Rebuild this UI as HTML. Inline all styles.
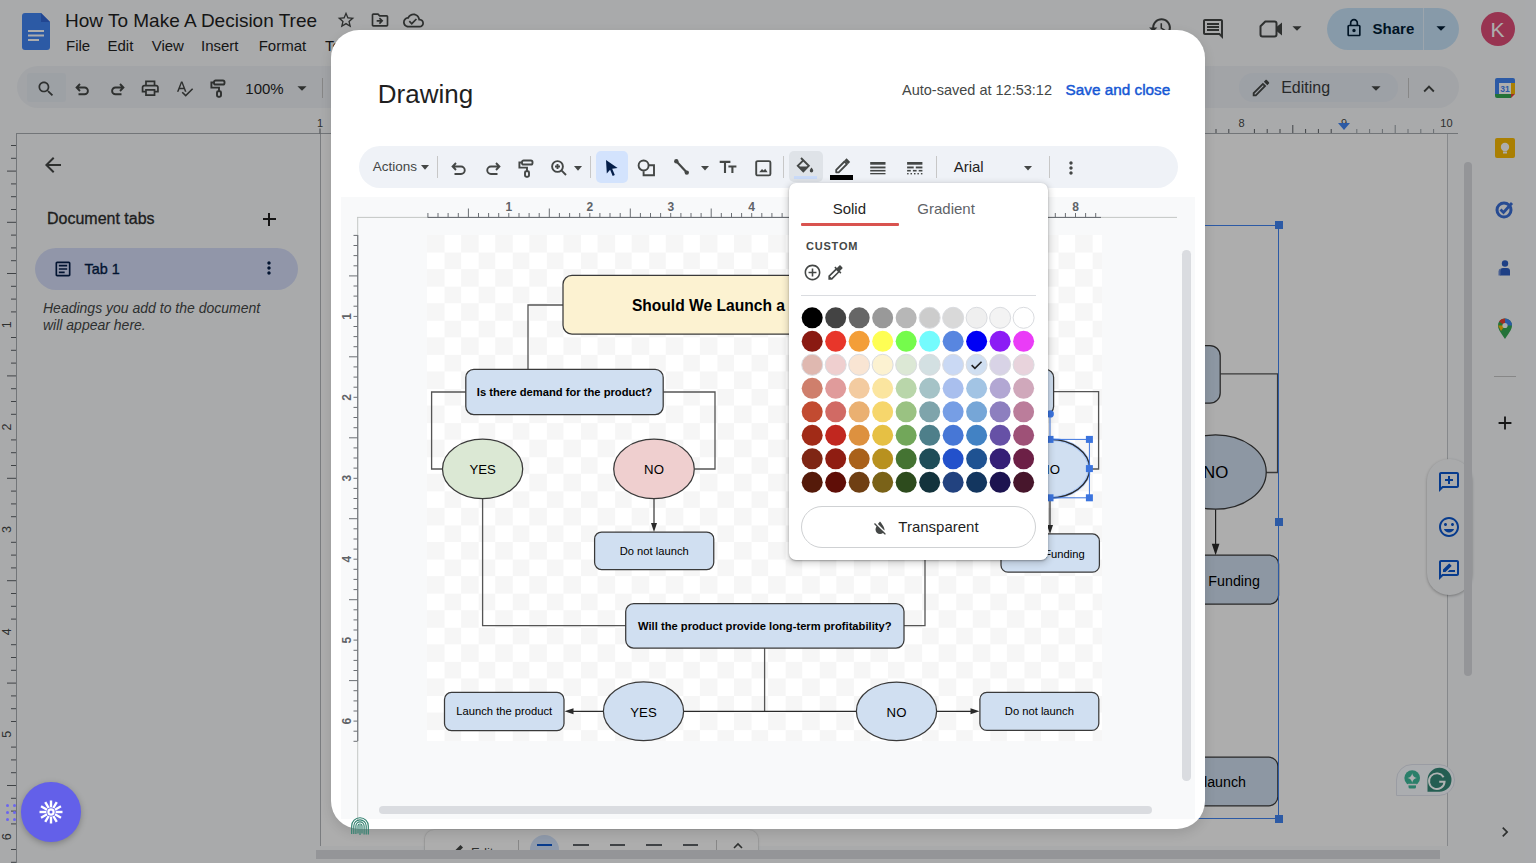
<!DOCTYPE html>
<html><head><meta charset="utf-8"><title>Drawing</title>
<style>
*{box-sizing:border-box;margin:0;padding:0}
html,body{width:1536px;height:863px;overflow:hidden}
body{position:relative;background:#f9fbfd;font-family:"Liberation Sans",sans-serif;color:#1f1f1f}
.a{position:absolute}
.t{position:absolute;white-space:nowrap;font-family:"Liberation Sans",sans-serif}
svg{overflow:visible}
</style></head><body>
<div class="a" style="left:320.0px;top:133.0px;width:1127.0px;height:713.0px;background:#ffffff"></div>
<div class="a" style="left:320.0px;top:133.0px;width:1.0px;height:713.0px;background:#b4b7bb"></div>
<div class="a" style="left:1447.0px;top:133.0px;width:1.0px;height:713.0px;background:#c6c9cd"></div>
<svg class="a" style="left:22.0px;top:13.0px;" width="28" height="37" viewBox="0 0 28 37"><path d="M0 3 Q0 0 3 0 H19 L28 9 V34 Q28 37 25 37 H3 Q0 37 0 34 Z" fill="#4285f4"/><path d="M19 0 V9 H28 Z" fill="#3367d6"/><rect x="6" y="17" width="16" height="2" fill="#fff"/><rect x="6" y="21.5" width="16" height="2" fill="#fff"/><rect x="6" y="26" width="11" height="2" fill="#fff"/></svg>
<div class="t" style="left:65.0px;top:11.4px;font-size:19px;line-height:19px;color:#1f1f1f;font-weight:normal;">How To Make A Decision Tree</div>
<svg class="a" style="left:335.5px;top:9.5px" width="20" height="20" viewBox="0 0 24 24"><path fill="#444746" d="M22 9.24l-7.19-.62L12 2 9.19 8.63 2 9.24l5.46 4.73L5.82 21 12 17.27 18.18 21l-1.63-7.03L22 9.24zM12 15.4l-3.76 2.27 1-4.28-3.32-2.88 4.38-.38L12 6.1l1.71 4.04 4.38.38-3.32 2.88 1 4.28L12 15.4z"/></svg>
<svg class="a" style="left:369.5px;top:10.0px" width="20" height="20" viewBox="0 0 24 24"><path fill="#444746" d="M20 6h-8l-2-2H4c-1.1 0-1.99.9-1.99 2L2 18c0 1.1.9 2 2 2h16c1.1 0 2-.9 2-2V8c0-1.1-.9-2-2-2zm0 12H4V6h5.17l2 2H20v10zm-7.84-6H8v2h4.16l-1.59 1.59L11.99 17 16 13.01 11.99 9l-1.41 1.41L12.16 12z"/></svg>
<svg class="a" style="left:402.5px;top:9.5px" width="21" height="21" viewBox="0 0 24 24"><path fill="#444746" d="M19.35 10.04C18.67 6.59 15.64 4 12 4 9.11 4 6.6 5.64 5.35 8.04 2.34 8.36 0 10.91 0 14c0 3.31 2.69 6 6 6h13c2.76 0 5-2.24 5-5 0-2.64-2.05-4.78-4.65-4.96zM19 18H6c-2.21 0-4-1.79-4-4 0-2.05 1.53-3.76 3.56-3.97l1.07-.11.5-.95C8.08 7.14 9.94 6 12 6c2.62 0 4.88 1.86 5.39 4.43l.3 1.5 1.53.11c1.56.1 2.78 1.41 2.78 2.96 0 1.65-1.35 3-3 3zm-9-3.82l-2.09-2.09L6.5 13.5 10 17l6.01-6.01-1.41-1.41z"/></svg>
<div class="t" style="left:66.0px;top:38.0px;font-size:15px;line-height:15px;color:#1f1f1f;font-weight:normal;">File</div>
<div class="t" style="left:107.5px;top:38.0px;font-size:15px;line-height:15px;color:#1f1f1f;font-weight:normal;">Edit</div>
<div class="t" style="left:151.7px;top:38.0px;font-size:15px;line-height:15px;color:#1f1f1f;font-weight:normal;">View</div>
<div class="t" style="left:201.0px;top:38.0px;font-size:15px;line-height:15px;color:#1f1f1f;font-weight:normal;">Insert</div>
<div class="t" style="left:258.7px;top:38.0px;font-size:15px;line-height:15px;color:#1f1f1f;font-weight:normal;">Format</div>
<div class="t" style="left:325.0px;top:38.0px;font-size:15px;line-height:15px;color:#1f1f1f;font-weight:normal;">Tools</div>
<svg class="a" style="left:1148.0px;top:15.0px" width="25" height="25" viewBox="0 0 24 24"><path fill="#444746" d="M13 3c-4.97 0-9 4.03-9 9H1l3.89 3.89.07.14L9 12H6c0-3.87 3.13-7 7-7s7 3.13 7 7-3.13 7-7 7c-1.93 0-3.68-.79-4.94-2.06l-1.42 1.42C8.27 19.99 10.51 21 13 21c4.97 0 9-4.03 9-9s-4.03-9-9-9zm-1 5v5l4.28 2.54.72-1.21-3.5-2.08V8H12z"/></svg>
<svg class="a" style="left:1201.0px;top:17.0px" width="24" height="24" viewBox="0 0 24 24"><path fill="#444746" d="M21.99 4c0-1.1-.89-2-1.99-2H4c-1.1 0-2 .9-2 2v12c0 1.1.9 2 2 2h14l4 4-.01-18zM20 4v13.17L18.83 16H4V4h16zM6 12h12v2H6zm0-3h12v2H6zm0-3h12v2H6z"/></svg>
<svg class="a" style="left:1259.0px;top:19.2px;" width="26" height="22" viewBox="0 0 26 22"><path d="M6.3 2.5 H15.5 Q17.5 2.5 17.5 4.5 V15.5 Q17.5 17.5 15.5 17.5 H3.5 Q1.5 17.5 1.5 15.5 V7.3 Z" fill="none" stroke="#444746" stroke-width="2" stroke-linejoin="round"/><path d="M17.5 8 L23 3.5 V16.5 L17.5 12 Z" fill="#444746"/></svg>
<svg class="a" style="left:1286.0px;top:17.0px" width="22" height="22" viewBox="0 0 24 24"><path fill="#444746" d="M7 10l5 5 5-5z"/></svg>
<div class="a" style="left:1327.0px;top:7.5px;width:132.0px;height:42.5px;background:#c8e4fa;border-radius:21px"></div>
<div class="a" style="left:1423.0px;top:7.5px;width:1.0px;height:42.5px;background:#e6f3ff"></div>
<svg class="a" style="left:1344.0px;top:18.0px" width="20" height="20" viewBox="0 0 24 24"><path fill="#001d35" d="M18 8h-1V6c0-2.76-2.24-5-5-5S7 3.24 7 6v2H6c-1.1 0-2 .9-2 2v10c0 1.1.9 2 2 2h12c1.1 0 2-.9 2-2V10c0-1.1-.9-2-2-2zM9 6c0-1.66 1.34-3 3-3s3 1.34 3 3v2H9V6zm9 14H6V10h12v10zm-6-3c1.1 0 2-.9 2-2s-.9-2-2-2-2 .9-2 2 .9 2 2 2z"/></svg>
<div class="t" style="left:1372.6px;top:21.4px;font-size:15px;line-height:15px;color:#001d35;font-weight:bold;">Share</div>
<svg class="a" style="left:1430.0px;top:17.0px" width="22" height="22" viewBox="0 0 24 24"><path fill="#001d35" d="M7 10l5 5 5-5z"/></svg>
<div class="a" style="left:1480.6px;top:11.8px;width:34.0px;height:34.0px;background:#e14d78;border-radius:50%"></div>
<div class="t" style="left:1197.6px;width:600px;text-align:center;top:18.7px;font-size:21px;line-height:21px;color:#ffffff;font-weight:normal;">K</div>
<div class="a" style="left:17.0px;top:66.0px;width:1442.0px;height:42.0px;background:#eff2f6;border-radius:21px"></div>
<div class="a" style="left:27.0px;top:73.0px;width:39.0px;height:29.4px;background:#e8edf4;border-radius:3px"></div>
<svg class="a" style="left:36.0px;top:78.5px" width="20" height="20" viewBox="0 0 24 24"><path fill="#444746" d="M15.5 14h-.79l-.28-.27C15.41 12.59 16 11.11 16 9.5 16 5.91 13.09 3 9.5 3S3 5.91 3 9.5 5.91 16 9.5 16c1.61 0 3.09-.59 4.23-1.57l.27.28v.79l5 4.99L20.49 19l-4.99-5zm-6 0C7.01 14 5 11.99 5 9.5S7.01 5 9.5 5 14 7.01 14 9.5 11.99 14 9.5 14z"/></svg>
<svg class="a" style="left:74.5px;top:82.0px;" width="16" height="16" viewBox="0 0 16 16"><path d="M5 2 L1.6 5.5 L5 9 M1.6 5.5 H9.5 A3.4 3.4 0 0 1 9.5 12.3 H3.5" fill="none" stroke="#444746" stroke-width="1.9"/></svg>
<svg class="a" style="left:108.5px;top:82.0px;" width="16" height="16" viewBox="0 0 16 16"><path d="M11 2 L14.4 5.5 L11 9 M14.4 5.5 H6.5 A3.4 3.4 0 0 0 6.5 12.3 H12.5" fill="none" stroke="#444746" stroke-width="1.9"/></svg>
<svg class="a" style="left:140.3px;top:78.3px" width="20.5" height="20.5" viewBox="0 0 24 24"><path fill="#444746" d="M19 8h-1V3H6v5H5c-1.66 0-3 1.34-3 3v6h4v4h12v-4h4v-6c0-1.66-1.34-3-3-3zM8 5h8v3H8V5zm8 12v2H8v-4h8v2zm2-2v-2H6v2H4v-4c0-.55.45-1 1-1h14c.55 0 1 .45 1 1v4h-2z"/></svg>
<svg class="a" style="left:174.8px;top:78.8px" width="19" height="19" viewBox="0 0 24 24"><path fill="#444746" d="M12.45 16h2.09L9.43 3H7.57L2.46 16h2.09l1.12-3h5.64l1.14 3zm-6.02-5L8.5 5.48 10.57 11H6.43zm15.16.59l-8.09 8.09L9.83 16l-1.41 1.41 5.09 5.09L23 13l-1.41-1.41z"/></svg>
<svg class="a" style="left:209.0px;top:79.0px;" width="18" height="20" viewBox="0 0 18 20"><rect x="5" y="1.5" width="10.5" height="4" rx="1.6" fill="none" stroke="#444746" stroke-width="1.9"/><path d="M5 3.5 H2.4 V8.6 H10 V12" fill="none" stroke="#444746" stroke-width="1.9"/><rect x="8" y="12.2" width="4" height="5.6" rx="1.2" fill="none" stroke="#444746" stroke-width="1.9"/></svg>
<div class="t" style="left:245.3px;top:81.2px;font-size:15px;line-height:15px;color:#1f1f1f;font-weight:normal;">100%</div>
<svg class="a" style="left:291.0px;top:77.0px" width="22" height="22" viewBox="0 0 24 24"><path fill="#444746" d="M7 10l5 5 5-5z"/></svg>
<div class="a" style="left:322.0px;top:78.0px;width:1.0px;height:20.0px;background:#c7c7c7"></div>
<div class="a" style="left:1239.0px;top:73.0px;width:159.0px;height:29.0px;background:#e8edf5;border-radius:14px"></div>
<svg class="a" style="left:1250.0px;top:77.0px" width="22" height="22" viewBox="0 0 24 24"><path fill="#444746" d="M3 17.25V21h3.75L17.81 9.94l-3.75-3.75L3 17.25zM5.92 19H5v-.92l9.06-9.06.92.92L5.92 19zM20.71 5.63l-2.34-2.34c-.2-.2-.45-.29-.71-.29s-.51.1-.7.29l-1.83 1.83 3.75 3.75 1.83-1.83c.39-.39.39-1.02 0-1.41z"/></svg>
<div class="t" style="left:1281.2px;top:79.8px;font-size:16px;line-height:16px;color:#3a3c3d;font-weight:normal;">Editing</div>
<svg class="a" style="left:1365.0px;top:77.0px" width="22" height="22" viewBox="0 0 24 24"><path fill="#444746" d="M7 10l5 5 5-5z"/></svg>
<div class="a" style="left:1408.0px;top:78.0px;width:1.0px;height:20.0px;background:#c7c7c7"></div>
<svg class="a" style="left:1418.0px;top:78.0px" width="22" height="22" viewBox="0 0 24 24"><path fill="#444746" d="M12 8l-6 6 1.41 1.41L12 10.83l4.59 4.58L18 14z"/></svg>
<div class="a" style="left:16.0px;top:133.0px;width:1442.0px;height:1.0px;background:#a9adb1"></div>
<div class="a" style="left:16.0px;top:133.0px;width:1.0px;height:730.0px;background:#a9adb1"></div>
<svg class="a" style="left:0.0px;top:0.0px;" width="1536" height="140" viewBox="0 0 1536 140"><text x="320.0" y="127" text-anchor="middle" font-size="11" fill="#444746" font-family="Liberation Sans">1</text><rect x="319.5" y="128.5" width="1" height="5" fill="#5f6368"/><rect x="332.3" y="129" width="1" height="4" fill="#9aa0a6"/><rect x="345.1" y="129" width="1" height="4" fill="#9aa0a6"/><rect x="357.9" y="129" width="1" height="4" fill="#9aa0a6"/><rect x="370.7" y="125" width="1" height="8" fill="#9aa0a6"/><rect x="383.5" y="129" width="1" height="4" fill="#9aa0a6"/><rect x="396.3" y="129" width="1" height="4" fill="#9aa0a6"/><rect x="409.1" y="129" width="1" height="4" fill="#9aa0a6"/><rect x="434.7" y="129" width="1" height="4" fill="#5f6368"/><rect x="447.5" y="129" width="1" height="4" fill="#5f6368"/><rect x="460.3" y="129" width="1" height="4" fill="#5f6368"/><rect x="473.1" y="125" width="1" height="8" fill="#5f6368"/><rect x="485.9" y="129" width="1" height="4" fill="#5f6368"/><rect x="498.7" y="129" width="1" height="4" fill="#5f6368"/><rect x="511.5" y="129" width="1" height="4" fill="#5f6368"/><text x="524.8" y="127" text-anchor="middle" font-size="11" fill="#444746" font-family="Liberation Sans">1</text><rect x="537.1" y="129" width="1" height="4" fill="#5f6368"/><rect x="549.9" y="129" width="1" height="4" fill="#5f6368"/><rect x="562.7" y="129" width="1" height="4" fill="#5f6368"/><rect x="575.5" y="125" width="1" height="8" fill="#5f6368"/><rect x="588.3" y="129" width="1" height="4" fill="#5f6368"/><rect x="601.1" y="129" width="1" height="4" fill="#5f6368"/><rect x="613.9" y="129" width="1" height="4" fill="#5f6368"/><text x="627.2" y="127" text-anchor="middle" font-size="11" fill="#444746" font-family="Liberation Sans">2</text><rect x="639.5" y="129" width="1" height="4" fill="#5f6368"/><rect x="652.3" y="129" width="1" height="4" fill="#5f6368"/><rect x="665.1" y="129" width="1" height="4" fill="#5f6368"/><rect x="677.9" y="125" width="1" height="8" fill="#5f6368"/><rect x="690.7" y="129" width="1" height="4" fill="#5f6368"/><rect x="703.5" y="129" width="1" height="4" fill="#5f6368"/><rect x="716.3" y="129" width="1" height="4" fill="#5f6368"/><text x="729.6" y="127" text-anchor="middle" font-size="11" fill="#444746" font-family="Liberation Sans">3</text><rect x="741.9" y="129" width="1" height="4" fill="#5f6368"/><rect x="754.7" y="129" width="1" height="4" fill="#5f6368"/><rect x="767.5" y="129" width="1" height="4" fill="#5f6368"/><rect x="780.3" y="125" width="1" height="8" fill="#5f6368"/><rect x="793.1" y="129" width="1" height="4" fill="#5f6368"/><rect x="805.9" y="129" width="1" height="4" fill="#5f6368"/><rect x="818.7" y="129" width="1" height="4" fill="#5f6368"/><text x="832.0" y="127" text-anchor="middle" font-size="11" fill="#444746" font-family="Liberation Sans">4</text><rect x="844.3" y="129" width="1" height="4" fill="#5f6368"/><rect x="857.1" y="129" width="1" height="4" fill="#5f6368"/><rect x="869.9" y="129" width="1" height="4" fill="#5f6368"/><rect x="882.7" y="125" width="1" height="8" fill="#5f6368"/><rect x="895.5" y="129" width="1" height="4" fill="#5f6368"/><rect x="908.3" y="129" width="1" height="4" fill="#5f6368"/><rect x="921.1" y="129" width="1" height="4" fill="#5f6368"/><text x="934.4" y="127" text-anchor="middle" font-size="11" fill="#444746" font-family="Liberation Sans">5</text><rect x="946.7" y="129" width="1" height="4" fill="#5f6368"/><rect x="959.5" y="129" width="1" height="4" fill="#5f6368"/><rect x="972.3" y="129" width="1" height="4" fill="#5f6368"/><rect x="985.1" y="125" width="1" height="8" fill="#5f6368"/><rect x="997.9" y="129" width="1" height="4" fill="#5f6368"/><rect x="1010.7" y="129" width="1" height="4" fill="#5f6368"/><rect x="1023.5" y="129" width="1" height="4" fill="#5f6368"/><text x="1036.8" y="127" text-anchor="middle" font-size="11" fill="#444746" font-family="Liberation Sans">6</text><rect x="1049.1" y="129" width="1" height="4" fill="#5f6368"/><rect x="1061.9" y="129" width="1" height="4" fill="#5f6368"/><rect x="1074.7" y="129" width="1" height="4" fill="#5f6368"/><rect x="1087.5" y="125" width="1" height="8" fill="#5f6368"/><rect x="1100.3" y="129" width="1" height="4" fill="#5f6368"/><rect x="1113.1" y="129" width="1" height="4" fill="#5f6368"/><rect x="1125.9" y="129" width="1" height="4" fill="#5f6368"/><text x="1139.2" y="127" text-anchor="middle" font-size="11" fill="#444746" font-family="Liberation Sans">7</text><rect x="1151.5" y="129" width="1" height="4" fill="#5f6368"/><rect x="1164.3" y="129" width="1" height="4" fill="#5f6368"/><rect x="1177.1" y="129" width="1" height="4" fill="#5f6368"/><rect x="1189.9" y="125" width="1" height="8" fill="#5f6368"/><rect x="1202.7" y="129" width="1" height="4" fill="#5f6368"/><rect x="1215.5" y="129" width="1" height="4" fill="#5f6368"/><rect x="1228.3" y="129" width="1" height="4" fill="#5f6368"/><text x="1241.6" y="127" text-anchor="middle" font-size="11" fill="#444746" font-family="Liberation Sans">8</text><rect x="1253.9" y="129" width="1" height="4" fill="#5f6368"/><rect x="1266.7" y="129" width="1" height="4" fill="#5f6368"/><rect x="1279.5" y="129" width="1" height="4" fill="#5f6368"/><rect x="1292.3" y="125" width="1" height="8" fill="#5f6368"/><rect x="1305.1" y="129" width="1" height="4" fill="#5f6368"/><rect x="1317.9" y="129" width="1" height="4" fill="#5f6368"/><rect x="1330.7" y="129" width="1" height="4" fill="#5f6368"/><text x="1344.0" y="127" text-anchor="middle" font-size="11" fill="#444746" font-family="Liberation Sans">9</text><rect x="1356.3" y="129" width="1" height="4" fill="#9aa0a6"/><rect x="1369.1" y="129" width="1" height="4" fill="#9aa0a6"/><rect x="1381.9" y="129" width="1" height="4" fill="#9aa0a6"/><rect x="1394.7" y="125" width="1" height="8" fill="#9aa0a6"/><rect x="1407.5" y="129" width="1" height="4" fill="#9aa0a6"/><rect x="1420.3" y="129" width="1" height="4" fill="#9aa0a6"/><rect x="1433.1" y="129" width="1" height="4" fill="#9aa0a6"/><text x="1446.4" y="127" text-anchor="middle" font-size="11" fill="#444746" font-family="Liberation Sans">10</text></svg>
<svg class="a" style="left:1338.0px;top:123.0px;" width="12" height="8" viewBox="0 0 12 8"><path d="M0 0 H12 L6 7 Z" fill="#4285f4"/></svg>
<svg class="a" style="left:0.0px;top:0.0px;" width="20" height="863" viewBox="0 0 20 863"><rect x="11" y="145.0" width="5" height="1" fill="#5f6368"/><rect x="11" y="157.8" width="5" height="1" fill="#5f6368"/><rect x="7" y="170.6" width="9" height="1" fill="#5f6368"/><rect x="11" y="183.4" width="5" height="1" fill="#5f6368"/><rect x="11" y="196.2" width="5" height="1" fill="#5f6368"/><rect x="11" y="209.0" width="5" height="1" fill="#5f6368"/><rect x="7" y="221.8" width="9" height="1" fill="#5f6368"/><rect x="11" y="234.6" width="5" height="1" fill="#5f6368"/><rect x="11" y="247.4" width="5" height="1" fill="#5f6368"/><rect x="11" y="260.2" width="5" height="1" fill="#5f6368"/><rect x="7" y="273.0" width="9" height="1" fill="#5f6368"/><rect x="11" y="285.8" width="5" height="1" fill="#5f6368"/><rect x="11" y="298.6" width="5" height="1" fill="#5f6368"/><rect x="11" y="311.4" width="5" height="1" fill="#5f6368"/><text x="0" y="0" transform="translate(10.5 324.7) rotate(-90)" text-anchor="middle" font-size="12.5" fill="#444746" font-family="Liberation Sans">1</text><rect x="11" y="337.0" width="5" height="1" fill="#5f6368"/><rect x="11" y="349.8" width="5" height="1" fill="#5f6368"/><rect x="11" y="362.6" width="5" height="1" fill="#5f6368"/><rect x="7" y="375.4" width="9" height="1" fill="#5f6368"/><rect x="11" y="388.2" width="5" height="1" fill="#5f6368"/><rect x="11" y="401.0" width="5" height="1" fill="#5f6368"/><rect x="11" y="413.8" width="5" height="1" fill="#5f6368"/><text x="0" y="0" transform="translate(10.5 427.1) rotate(-90)" text-anchor="middle" font-size="12.5" fill="#444746" font-family="Liberation Sans">2</text><rect x="11" y="439.4" width="5" height="1" fill="#5f6368"/><rect x="11" y="452.2" width="5" height="1" fill="#5f6368"/><rect x="11" y="465.0" width="5" height="1" fill="#5f6368"/><rect x="7" y="477.8" width="9" height="1" fill="#5f6368"/><rect x="11" y="490.6" width="5" height="1" fill="#5f6368"/><rect x="11" y="503.4" width="5" height="1" fill="#5f6368"/><rect x="11" y="516.2" width="5" height="1" fill="#5f6368"/><text x="0" y="0" transform="translate(10.5 529.5) rotate(-90)" text-anchor="middle" font-size="12.5" fill="#444746" font-family="Liberation Sans">3</text><rect x="11" y="541.8" width="5" height="1" fill="#5f6368"/><rect x="11" y="554.6" width="5" height="1" fill="#5f6368"/><rect x="11" y="567.4" width="5" height="1" fill="#5f6368"/><rect x="7" y="580.2" width="9" height="1" fill="#5f6368"/><rect x="11" y="593.0" width="5" height="1" fill="#5f6368"/><rect x="11" y="605.8" width="5" height="1" fill="#5f6368"/><rect x="11" y="618.6" width="5" height="1" fill="#5f6368"/><text x="0" y="0" transform="translate(10.5 631.9) rotate(-90)" text-anchor="middle" font-size="12.5" fill="#444746" font-family="Liberation Sans">4</text><rect x="11" y="644.2" width="5" height="1" fill="#5f6368"/><rect x="11" y="657.0" width="5" height="1" fill="#5f6368"/><rect x="11" y="669.8" width="5" height="1" fill="#5f6368"/><rect x="7" y="682.6" width="9" height="1" fill="#5f6368"/><rect x="11" y="695.4" width="5" height="1" fill="#5f6368"/><rect x="11" y="708.2" width="5" height="1" fill="#5f6368"/><rect x="11" y="721.0" width="5" height="1" fill="#5f6368"/><text x="0" y="0" transform="translate(10.5 734.3) rotate(-90)" text-anchor="middle" font-size="12.5" fill="#444746" font-family="Liberation Sans">5</text><rect x="11" y="746.6" width="5" height="1" fill="#5f6368"/><rect x="11" y="759.4" width="5" height="1" fill="#5f6368"/><rect x="11" y="772.2" width="5" height="1" fill="#5f6368"/><rect x="7" y="785.0" width="9" height="1" fill="#5f6368"/><rect x="11" y="797.8" width="5" height="1" fill="#5f6368"/><rect x="11" y="810.6" width="5" height="1" fill="#5f6368"/><rect x="11" y="823.4" width="5" height="1" fill="#5f6368"/><text x="0" y="0" transform="translate(10.5 836.7) rotate(-90)" text-anchor="middle" font-size="12.5" fill="#444746" font-family="Liberation Sans">6</text><rect x="11" y="849.0" width="5" height="1" fill="#5f6368"/><rect x="11" y="861.8" width="5" height="1" fill="#5f6368"/></svg>
<svg class="a" style="left:41.0px;top:153.0px" width="24" height="24" viewBox="0 0 24 24"><path fill="#444746" d="M20 11H7.83l5.59-5.59L12 4l-8 8 8 8 1.41-1.41L7.83 13H20v-2z"/></svg>
<div class="t" style="left:47.0px;top:211.3px;font-size:16px;line-height:16px;color:#2d2d2d;font-weight:normal;-webkit-text-stroke:0.3px #2d2d2d">Document tabs</div>
<div class="a" style="left:262.5px;top:218.0px;width:13.0px;height:2.2px;background:#1f1f1f"></div>
<div class="a" style="left:268.0px;top:212.5px;width:2.2px;height:13.0px;background:#1f1f1f"></div>
<div class="a" style="left:35.0px;top:248.0px;width:263.0px;height:42.0px;background:#d6ddf9;border-radius:21px"></div>
<svg class="a" style="left:53.0px;top:258.5px" width="20" height="20" viewBox="0 0 24 24"><path fill="#041e49" d="M19 3H5c-1.1 0-2 .9-2 2v14c0 1.1.9 2 2 2h14c1.1 0 2-.9 2-2V5c0-1.1-.9-2-2-2zm0 16H5V5h14v14zM7 7h10v2H7zm0 4h10v2H7zm0 4h7v2H7z"/></svg>
<div class="t" style="left:84.5px;top:261.8px;font-size:14.4px;line-height:14.4px;color:#041e49;font-weight:normal;-webkit-text-stroke:0.35px #041e49">Tab 1</div>
<svg class="a" style="left:259.0px;top:258.0px" width="20" height="20" viewBox="0 0 24 24"><path fill="#041e49" d="M12 8c1.1 0 2-.9 2-2s-.9-2-2-2-2 .9-2 2 .9 2 2 2zm0 2c-1.1 0-2 .9-2 2s.9 2 2 2 2-.9 2-2-.9-2-2-2zm0 6c-1.1 0-2 .9-2 2s.9 2 2 2 2-.9 2-2-.9-2-2-2z"/></svg>
<div class="t" style="left:43.0px;top:300.5px;font-size:14px;line-height:14px;color:#444746;font-weight:normal;font-style:italic">Headings you add to the document</div>
<div class="t" style="left:43.0px;top:318.4px;font-size:14px;line-height:14px;color:#444746;font-weight:normal;font-style:italic">will appear here.</div>
<svg class="a" style="left:0;top:0" width="1536" height="863" viewBox="0 0 1536 863"><g transform="translate(-123.14 -125.475) scale(1.275)"><path d="M563 305 H528 V369.4" fill="none" stroke="#555555" stroke-width="1.3" vector-effect="non-scaling-stroke"/><path d="M963 305 H998 V369.4" fill="none" stroke="#555555" stroke-width="1.3" vector-effect="non-scaling-stroke"/><path d="M465.8 392 H431.6 V469 H442.5" fill="none" stroke="#555555" stroke-width="1.3" vector-effect="non-scaling-stroke"/><path d="M663.2 392 H715 V469 H694.4" fill="none" stroke="#555555" stroke-width="1.3" vector-effect="non-scaling-stroke"/><path d="M856.5 392 H813 V469 H822" fill="none" stroke="#555555" stroke-width="1.3" vector-effect="non-scaling-stroke"/><path d="M1053.6 391.7 H1098.6 V469 H1089.4" fill="none" stroke="#555555" stroke-width="1.3" vector-effect="non-scaling-stroke"/><path d="M482.6 498.5 V625.6 H625.7" fill="none" stroke="#555555" stroke-width="1.3" vector-effect="non-scaling-stroke"/><path d="M904 625.6 H925 V498.5" fill="none" stroke="#555555" stroke-width="1.3" vector-effect="non-scaling-stroke"/><path d="M764.6 648.1 V711.3" fill="none" stroke="#555555" stroke-width="1.3" vector-effect="non-scaling-stroke"/><path d="M683.6 711.3 H856.4" fill="none" stroke="#2a2a2a" stroke-width="1.15" vector-effect="non-scaling-stroke"/><path d="M654 498.5 V528" fill="none" stroke="#2a2a2a" stroke-width="1.15" vector-effect="non-scaling-stroke"/><path d="M654 531.9 l-3 -9 h6z" fill="#2a2a2a" vector-effect="non-scaling-stroke"/><path d="M1050 497.8 V530" fill="none" stroke="#2a2a2a" stroke-width="1.15" vector-effect="non-scaling-stroke"/><path d="M1050 533.9 l-3 -9 h6z" fill="#2a2a2a" vector-effect="non-scaling-stroke"/><path d="M603.4 711.3 H568" fill="none" stroke="#2a2a2a" stroke-width="1.15" vector-effect="non-scaling-stroke"/><path d="M564.5 711.3 l9 -3 v6z" fill="#2a2a2a" vector-effect="non-scaling-stroke"/><path d="M936.6 711.3 H976" fill="none" stroke="#2a2a2a" stroke-width="1.15" vector-effect="non-scaling-stroke"/><path d="M979.5 711.3 l-9 -3 v6z" fill="#2a2a2a" vector-effect="non-scaling-stroke"/><rect x="563" y="275.3" width="400.00" height="58.90" rx="9" fill="#fcf2d1" stroke="#3a3a3a" stroke-width="1.25" vector-effect="non-scaling-stroke"/><text x="763" y="310.7" text-anchor="middle" font-size="15.6" font-family="Liberation Sans" fill="#000" font-weight="bold">Should We Launch a New Product?</text><rect x="465.8" y="369.4" width="197.40" height="45.20" rx="8" fill="#d0dff1" stroke="#3a3a3a" stroke-width="1.25" vector-effect="non-scaling-stroke"/><text x="564.5" y="395.6" text-anchor="middle" font-size="11.2" font-family="Liberation Sans" fill="#000" font-weight="bold">Is there demand for the product?</text><rect x="856.5" y="369.4" width="197.10" height="45.20" rx="8" fill="#d0dff1" stroke="#3a3a3a" stroke-width="1.25" vector-effect="non-scaling-stroke"/><text x="955" y="395.6" text-anchor="middle" font-size="11.2" font-family="Liberation Sans" fill="#000" font-weight="bold">Is there enough funding?</text><ellipse cx="482.6" cy="468.9" rx="40.1" ry="29.7" fill="#dbe8d4" stroke="#3a3a3a" stroke-width="1.25" vector-effect="non-scaling-stroke"/><text x="482.6" y="473.8" text-anchor="middle" font-size="13.2" font-family="Liberation Sans" fill="#000">YES</text><ellipse cx="654" cy="468.9" rx="40.3" ry="29.7" fill="#efcfcf" stroke="#3a3a3a" stroke-width="1.25" vector-effect="non-scaling-stroke"/><text x="654" y="473.8" text-anchor="middle" font-size="13.2" font-family="Liberation Sans" fill="#000">NO</text><ellipse cx="925" cy="468.9" rx="40.1" ry="29.7" fill="#dbe8d4" stroke="#3a3a3a" stroke-width="1.25" vector-effect="non-scaling-stroke"/><text x="925" y="473.8" text-anchor="middle" font-size="13.2" font-family="Liberation Sans" fill="#000">YES</text><ellipse cx="1050" cy="468.6" rx="39.7" ry="29.2" fill="#d0dff1" stroke="#3a3a3a" stroke-width="1.25" vector-effect="non-scaling-stroke"/><text x="1050" y="473.5" text-anchor="middle" font-size="13.2" font-family="Liberation Sans" fill="#000">NO</text><rect x="594.6" y="532" width="119.15" height="37.60" rx="7" fill="#d0dff1" stroke="#3a3a3a" stroke-width="1.25" vector-effect="non-scaling-stroke"/><text x="654.2" y="555" text-anchor="middle" font-size="11.2" font-family="Liberation Sans" fill="#000">Do not launch</text><rect x="1001" y="533.9" width="98.40" height="38.30" rx="7" fill="#d0dff1" stroke="#3a3a3a" stroke-width="1.25" vector-effect="non-scaling-stroke"/><text x="1050.2" y="558" text-anchor="middle" font-size="11.2" font-family="Liberation Sans" fill="#000">Seek Funding</text><rect x="625.7" y="603.6" width="278.30" height="44.50" rx="8" fill="#d0dff1" stroke="#3a3a3a" stroke-width="1.25" vector-effect="non-scaling-stroke"/><text x="764.8" y="630.3" text-anchor="middle" font-size="11.2" font-family="Liberation Sans" fill="#000" font-weight="bold">Will the product provide long-term profitability?</text><ellipse cx="643.5" cy="711.3" rx="40.1" ry="29.4" fill="#d0dff1" stroke="#3a3a3a" stroke-width="1.25" vector-effect="non-scaling-stroke"/><text x="643.5" y="716.5" text-anchor="middle" font-size="13.2" font-family="Liberation Sans" fill="#000">YES</text><ellipse cx="896.5" cy="711.3" rx="40.1" ry="29.3" fill="#d0dff1" stroke="#3a3a3a" stroke-width="1.25" vector-effect="non-scaling-stroke"/><text x="896.5" y="716.5" text-anchor="middle" font-size="13.2" font-family="Liberation Sans" fill="#000">NO</text><rect x="444.5" y="692.4" width="119.50" height="38.20" rx="7" fill="#d0dff1" stroke="#3a3a3a" stroke-width="1.25" vector-effect="non-scaling-stroke"/><text x="504.25" y="715.4" text-anchor="middle" font-size="11.2" font-family="Liberation Sans" fill="#000">Launch the product</text><rect x="979.9" y="692.3" width="118.90" height="38.10" rx="7" fill="#d0dff1" stroke="#3a3a3a" stroke-width="1.25" vector-effect="non-scaling-stroke"/><text x="1039.35" y="715.4" text-anchor="middle" font-size="11.2" font-family="Liberation Sans" fill="#000">Do not launch</text></g></svg>
<div class="a" style="left:1150.0px;top:225.0px;width:129.0px;height:1.0px;background:#4285f4"></div>
<div class="a" style="left:1278.0px;top:225.0px;width:1.0px;height:593.0px;background:#4285f4"></div>
<div class="a" style="left:1150.0px;top:818.0px;width:129.0px;height:1.0px;background:#4285f4"></div>
<div class="a" style="left:1275.0px;top:221.0px;width:8.0px;height:8.0px;background:#4285f4"></div>
<div class="a" style="left:1275.0px;top:518.0px;width:8.0px;height:8.0px;background:#4285f4"></div>
<div class="a" style="left:1275.0px;top:814.5px;width:8.0px;height:8.0px;background:#4285f4"></div>
<div class="a" style="left:1463.5px;top:162.0px;width:8.5px;height:514.0px;background:#dadce0;border-radius:4px"></div>
<div class="a" style="left:316.0px;top:850.0px;width:1124.0px;height:8.5px;background:#dadce0"></div>
<svg class="a" style="left:1494.0px;top:77.0px;" width="22" height="22" viewBox="0 0 22 22"><rect x="1" y="1" width="20" height="20" rx="2" fill="#fff"/><path d="M1 6 H21 V3 Q21 1 19 1 H3 Q1 1 1 3Z" fill="#4285f4"/><path d="M1 17 H17 V21 H3 Q1 21 1 19Z" fill="#34a853"/><path d="M17 17 H21 L17 21Z" fill="#ea4335"/><path d="M1 6 V17 H5 V6Z" fill="#4285f4"/><path d="M17 6 H21 V17 H17Z" fill="#fbbc04"/><text x="11" y="15" text-anchor="middle" font-size="8.5" fill="#4285f4" font-family="Liberation Sans" font-weight="bold">31</text></svg>
<svg class="a" style="left:1494.0px;top:137.0px;" width="22" height="22" viewBox="0 0 22 22"><rect x="1" y="1" width="20" height="20" rx="2" fill="#fbbc04"/><circle cx="11" cy="10" r="4.2" fill="#fff"/><rect x="9" y="14.5" width="4" height="2" fill="#fff"/></svg>
<svg class="a" style="left:1494.0px;top:198.0px;" width="22" height="22" viewBox="0 0 22 22"><circle cx="10" cy="12" r="7" fill="none" stroke="#3a6fd8" stroke-width="3"/><path d="M6.5 11.5 L9.5 14.5 L18 5" fill="none" stroke="#3a6fd8" stroke-width="2.8"/></svg>
<svg class="a" style="left:1494.0px;top:257.0px;" width="22" height="22" viewBox="0 0 22 22"><circle cx="11" cy="6.5" r="3.2" fill="#2f5fc4"/><path d="M6 18.5 V14 Q6 11 9 11 H13 Q16 11 16 14 V18.5 Z" fill="#2f5fc4"/><path d="M4.5 18.5 V14.5 Q4.5 12 6.5 11.5 V18.5Z" fill="#6f8fd8"/></svg>
<svg class="a" style="left:1494.0px;top:317.0px;" width="22" height="24" viewBox="0 0 22 24"><path d="M11 22 C8 17 4 13 4 8.5 A7 7 0 0 1 18 8.5 C18 13 14 17 11 22Z" fill="#34a853"/><path d="M5 4.5 A7 7 0 0 1 11 1.5 L11 8.5Z" fill="#ea4335"/><path d="M11 1.5 A7 7 0 0 1 18 8.5 L11 8.5Z" fill="#4285f4"/><path d="M4 8.5 L11 8.5 L7 14Z" fill="#fbbc04"/><circle cx="11" cy="8.5" r="2.6" fill="#fff"/></svg>
<div class="a" style="left:1494.0px;top:376.0px;width:22.0px;height:1.0px;background:#c7c7c7"></div>
<svg class="a" style="left:1494.0px;top:412.0px" width="22" height="22" viewBox="0 0 24 24"><path fill="#1f1f1f" d="M19 13h-6v6h-2v-6H5v-2h6V5h2v6h6v2z"/></svg>
<svg class="a" style="left:1495.0px;top:822.0px" width="20" height="20" viewBox="0 0 24 24"><path fill="#444746" d="M10 6L8.59 7.41 13.17 12l-4.58 4.59L10 18l6-6z"/></svg>
<div class="a" style="left:1427.0px;top:458.5px;width:45.0px;height:136.5px;background:#f9fbfd;border-radius:22px;box-shadow:0 1px 3px rgba(0,0,0,.3)"></div>
<div class="a" style="left:1463.5px;top:440.0px;width:8.5px;height:170.0px;background:#dadce0"></div>
<svg class="a" style="transform:scaleX(-1);left:1437.0px;top:470.0px" width="24" height="24" viewBox="0 0 24 24"><path fill="#0b57d0" d="M22 4c0-1.1-.9-2-2-2H4c-1.1 0-1.99.9-1.99 2L2 16c0 1.1.9 2 2 2h14l4 4V4zm-2 0v13.17L18.83 16H4V4h16zm-9 2h2v3h3v2h-3v3h-2v-3H8V9h3z"/></svg>
<svg class="a" style="left:1437.0px;top:515.0px" width="24" height="24" viewBox="0 0 24 24"><path fill="#0b57d0" d="M11.99 2C6.47 2 2 6.48 2 12s4.47 10 9.99 10C17.52 22 22 17.52 22 12S17.52 2 11.99 2zM12 20c-4.42 0-8-3.58-8-8s3.58-8 8-8 8 3.58 8 8-3.58 8-8 8zm3.5-9c.83 0 1.5-.67 1.5-1.5S16.33 8 15.5 8 14 8.67 14 9.5s.67 1.5 1.5 1.5zm-7 0c.83 0 1.5-.67 1.5-1.5S9.33 8 8.5 8 7 8.67 7 9.5 7.67 11 8.5 11zm3.5 6.5c2.33 0 4.31-1.46 5.11-3.5H6.89c.8 2.04 2.78 3.5 5.11 3.5z"/></svg>
<svg class="a" style="left:1437.0px;top:558.0px" width="24" height="24" viewBox="0 0 24 24"><path fill="#0b57d0" d="M20 2H4c-1.1 0-1.99.9-1.99 2L2 22l4-4h14c1.1 0 2-.9 2-2V4c0-1.1-.9-2-2-2zm0 14H5.17l-.59.59-.58.58V4h16v12zm-9.5-2H18v-2h-5.5zm3.86-5.87c.2-.2.2-.51 0-.71l-1.77-1.77c-.2-.2-.51-.2-.71 0L6 11.53V14h2.47l5.89-5.87z"/></svg>
<div class="a" style="left:420px;top:825px;width:345px;height:25px;overflow:hidden">
<div class="a" style="left:5.0px;top:4.5px;width:333.0px;height:40.0px;background:#fff;border-radius:9px;box-shadow:0 0 0 1px rgba(0,0,0,.06),0 1px 3px rgba(0,0,0,.15)"></div>
<div class="a" style="left:110.0px;top:10.4px;width:29.4px;height:29.4px;background:#d3e3fd;border-radius:50%"></div>
<div class="a" style="left:116.7px;top:18.7px;width:15.3px;height:2.2px;background:#0b57d0"></div>
<div class="a" style="left:153.0px;top:18.7px;width:15.5px;height:2.2px;background:#5f6368"></div>
<div class="a" style="left:189.6px;top:18.7px;width:15.5px;height:2.2px;background:#5f6368"></div>
<div class="a" style="left:226.0px;top:18.7px;width:15.5px;height:2.2px;background:#5f6368"></div>
<div class="a" style="left:262.5px;top:18.7px;width:15.5px;height:2.2px;background:#5f6368"></div>
<div class="a" style="left:97.5px;top:15.0px;width:1.0px;height:10.0px;background:#c7c7c7"></div>
<div class="a" style="left:295.5px;top:15.0px;width:1.0px;height:10.0px;background:#c7c7c7"></div>
<svg class="a" style="left:32.0px;top:18.0px;" width="14" height="12" viewBox="0 0 14 12"><path d="M2 11 L3 7.5 L8.5 2 L11 4.5 L5.5 10 Z" fill="#444746"/></svg>
<div class="t" style="left:51.0px;top:21.0px;font-size:13px;line-height:13px;color:#444746;font-weight:normal;">Edit</div>
<svg class="a" style="left:313.0px;top:17.0px;" width="10" height="8" viewBox="0 0 10 8"><path d="M1 6 L5 2 L9 6" fill="none" stroke="#444746" stroke-width="1.6"/></svg>
</div>
<div class="a" style="left:316.0px;top:850.0px;width:1124.0px;height:8.5px;background:#dadce0"></div>
<div class="a" style="left:0.0px;top:0.0px;width:1536.0px;height:863.0px;background:rgba(0,0,0,.32)"></div>
<svg class="a" style="left:1395.0px;top:763.0px;" width="62" height="34" viewBox="0 0 62 34"><path d="M1.5 32.5 V17 A15.5 15.5 0 0 1 17 1.5 H44 A15.5 15.5 0 0 1 44 32.5 Z" fill="#abadb0" stroke="#9a9ca3" stroke-width="1"/><circle cx="17.2" cy="15" r="7.8" fill="#2a7f6a"/><path d="M13.5 20 H21 V24 Q21 25.5 19.5 25.5 H15 Q13.5 25.5 13.5 24 Z" fill="#2a7f6a"/><rect x="13" y="20.8" width="8.5" height="1.6" fill="#a8aaad"/><path d="M17.2 10.2 Q17.9 14.3 22 15 Q17.9 15.7 17.2 19.8 Q16.5 15.7 12.4 15 Q16.5 14.3 17.2 10.2Z" fill="#aeb0b2"/><path d="M32.5 29 V16.5 A12 12 0 1 1 44.5 28.8 H32.5 Z" fill="#245e52"/><path d="M48.6 14.3 A7.8 7.8 0 1 0 49.6 18.8 H44.2" fill="none" stroke="#b0b3b3" stroke-width="1.9"/></svg>
<div class="a" style="left:21.3px;top:782.0px;width:59.5px;height:59.5px;background:#6360e9;border-radius:50%;box-shadow:0 2px 6px rgba(0,0,0,.25)"></div>
<svg class="a" style="left:38.0px;top:799.0px;" width="26" height="26" viewBox="0 0 26 26"><g stroke="#fff" stroke-width="2.4" stroke-linecap="butt"><path d="M17.60 13.00 L24.50 13.00"/><path d="M16.98 15.30 L22.96 18.75"/><path d="M15.30 16.98 L18.75 22.96"/><path d="M13.00 17.60 L13.00 24.50"/><path d="M10.70 16.98 L7.25 22.96"/><path d="M9.02 15.30 L3.04 18.75"/><path d="M8.40 13.00 L1.50 13.00"/><path d="M9.02 10.70 L3.04 7.25"/><path d="M10.70 9.02 L7.25 3.04"/><path d="M13.00 8.40 L13.00 1.50"/><path d="M15.30 9.02 L18.75 3.04"/><path d="M16.98 10.70 L22.96 7.25"/></g><circle cx="13" cy="13" r="2.6" fill="none" stroke="#fff" stroke-width="2.2"/></svg>
<div class="a" style="left:5.5px;top:803.5px;width:3.0px;height:3.0px;background:#6b66ef;border-radius:50%"></div>
<div class="a" style="left:5.5px;top:810.5px;width:3.0px;height:3.0px;background:#6b66ef;border-radius:50%"></div>
<div class="a" style="left:5.5px;top:817.5px;width:3.0px;height:3.0px;background:#6b66ef;border-radius:50%"></div>
<div class="a" style="left:12.5px;top:803.5px;width:3.0px;height:3.0px;background:#6b66ef;border-radius:50%"></div>
<div class="a" style="left:12.5px;top:810.5px;width:3.0px;height:3.0px;background:#6b66ef;border-radius:50%"></div>
<div class="a" style="left:12.5px;top:817.5px;width:3.0px;height:3.0px;background:#6b66ef;border-radius:50%"></div>
<div class="a" style="left:331.0px;top:30.0px;width:874.0px;height:799.0px;background:#fff;border-radius:28px;box-shadow:0 4px 12px rgba(0,0,0,.12)"></div>
<div class="t" style="left:377.8px;top:81.0px;font-size:26px;line-height:26px;color:#1f1f1f;font-weight:normal;">Drawing</div>
<div class="t" style="left:902.0px;top:82.7px;font-size:14.5px;line-height:14.5px;color:#444746;font-weight:normal;">Auto-saved at 12:53:12</div>
<div class="t" style="left:1065.6px;top:82.0px;font-size:15.3px;line-height:15.3px;color:#1557d4;font-weight:normal;-webkit-text-stroke:0.45px #1557d4">Save and close</div>
<div class="a" style="left:359.0px;top:146.0px;width:819.0px;height:42.0px;background:#eff2f7;border-radius:21px"></div>
<div class="t" style="left:372.8px;top:159.5px;font-size:13.5px;line-height:13.5px;color:#444746;font-weight:normal;">Actions</div>
<svg class="a" style="left:421.0px;top:165.0px;" width="8" height="5" viewBox="0 0 8 5"><path d="M0 0 H8 L4 4.7Z" fill="#444746"/></svg>
<div class="a" style="left:437.1px;top:156.0px;width:1.0px;height:21.5px;background:#c7c7c7"></div>
<svg class="a" style="left:451.0px;top:161.0px;" width="16" height="16" viewBox="0 0 16 16"><path d="M5 2 L1.6 5.5 L5 9 M1.6 5.5 H10 A3.75 3.75 0 0 1 10 13 H3.5" fill="none" stroke="#444746" stroke-width="1.9"/></svg>
<svg class="a" style="left:485.0px;top:161.0px;" width="16" height="16" viewBox="0 0 16 16"><path d="M11 2 L14.4 5.5 L11 9 M14.4 5.5 H6 A3.75 3.75 0 0 0 6 13 H12.5" fill="none" stroke="#444746" stroke-width="1.9"/></svg>
<svg class="a" style="left:517.0px;top:159.0px;" width="18" height="20" viewBox="0 0 18 20"><rect x="5" y="1.5" width="10.5" height="4" rx="1.6" fill="none" stroke="#444746" stroke-width="1.9"/><path d="M5 3.5 H2.4 V8.6 H10 V12" fill="none" stroke="#444746" stroke-width="1.9"/><rect x="8" y="12.2" width="4" height="5.6" rx="1.2" fill="none" stroke="#444746" stroke-width="1.9"/></svg>
<svg class="a" style="left:550.0px;top:159.0px;" width="18" height="18" viewBox="0 0 18 18"><circle cx="7.5" cy="7.5" r="5.4" fill="none" stroke="#444746" stroke-width="1.9"/><path d="M11.4 11.4 L16 16" fill="none" stroke="#444746" stroke-width="1.9" stroke-width="2"/><path d="M7.5 5 V10 M5 7.5 H10" fill="none" stroke="#444746" stroke-width="1.9" stroke-width="1.6"/></svg>
<svg class="a" style="left:574.0px;top:165.6px;" width="8" height="5" viewBox="0 0 8 5"><path d="M0 0 H8 L4 4.7Z" fill="#444746"/></svg>
<div class="a" style="left:590.3px;top:156.0px;width:1.0px;height:21.5px;background:#c7c7c7"></div>
<div class="a" style="left:596.0px;top:151.0px;width:31.5px;height:32.0px;background:#d3e3fd;border-radius:5px"></div>
<svg class="a" style="left:600.0px;top:155.0px;" width="24" height="24" viewBox="0 0 24 24"><path d="M6 5 L17.6 13 L12.2 13.8 L14.8 19.9 L12.7 20.9 L10.1 14.8 L6.8 18.6 Z" fill="#041e49"/></svg>
<svg class="a" style="left:636.0px;top:157.0px;" width="22" height="22" viewBox="0 0 22 22"><circle cx="7.6" cy="8.5" r="5" fill="none" stroke="#444746" stroke-width="1.9"/><path d="M12.5 8.2 H18 V18.2 H7.6 V14.2" fill="none" stroke="#444746" stroke-width="1.9"/></svg>
<svg class="a" style="left:672.0px;top:157.0px;" width="20" height="20" viewBox="0 0 20 20"><path d="M4.3 4.3 L14.8 15.6" stroke="#444746" stroke-width="2.2"/><circle cx="4.3" cy="4.3" r="2.2" fill="#444746"/><circle cx="14.8" cy="15.6" r="2.2" fill="#444746"/></svg>
<svg class="a" style="left:700.5px;top:165.8px;" width="8" height="5" viewBox="0 0 8 5"><path d="M0 0 H8 L4 4.4Z" fill="#444746"/></svg>
<svg class="a" style="left:718.0px;top:159.0px;" width="20" height="16" viewBox="0 0 20 16"><path d="M1.7 2.9 H12.4 M7 2.9 V13.9 M10.4 7.5 H18.4 M14.4 7.5 V13.9" stroke="#444746" stroke-width="2.1" fill="none"/></svg>
<svg class="a" style="left:755.0px;top:160.0px;" width="17" height="17" viewBox="0 0 17 17"><rect x="1.2" y="1.1" width="14.2" height="14.3" rx="1.5" fill="none" stroke="#444746" stroke-width="1.9"/><path d="M4.2 12.3 L7 9 L8.6 10.6 L10.2 8.8 L12.6 12.3 Z" fill="#444746"/></svg>
<div class="a" style="left:782.9px;top:156.0px;width:1.0px;height:21.5px;background:#c7c7c7"></div>
<div class="a" style="left:789.1px;top:151.1px;width:33.6px;height:31.3px;background:#dfe3e8;border-radius:5px"></div>
<svg class="a" style="left:796.0px;top:156.0px;" width="20" height="20" viewBox="0 0 20 20"><path d="M5 2 L12.8 9.8 L7.3 15.3 L1.8 9.8 L6.8 4.8" fill="none" stroke="#444746" stroke-width="1.9"/><path d="M2.8 10.6 H11.8 L7.3 15.1Z" fill="#444746"/><path d="M15.5 11.5 C14.4 13 13.8 13.9 13.8 14.8 a1.7 1.7 0 0 0 3.4 0 c0-.9-.6-1.8-1.7-3.3z" fill="#444746"/></svg>
<div class="a" style="left:793.8px;top:175.6px;width:23.2px;height:3.6px;background:#c9daf8"></div>
<svg class="a" style="left:833.0px;top:158.0px;" width="18" height="17" viewBox="0 0 18 17"><path d="M3.2 14.3 V11.8 L11.5 3.5 L14 6 L5.7 14.3 Z" fill="none" stroke="#444746" stroke-width="1.8" stroke-linejoin="round"/><path d="M12.6 2.4 L13.6 1.4 L16.1 3.9 L15.1 4.9Z" fill="#444746" stroke="#444746" stroke-width="1.5"/></svg>
<div class="a" style="left:830.0px;top:175.3px;width:23.2px;height:4.5px;background:#000"></div>
<svg class="a" style="left:870.0px;top:161.0px;" width="16" height="14" viewBox="0 0 16 14"><rect x="0.2" y="1" width="15.3" height="2.7" fill="#444746"/><rect x="0.2" y="5.5" width="15.3" height="1.9" fill="#444746"/><rect x="0.2" y="8.9" width="15.3" height="1.6" fill="#444746"/><rect x="0.2" y="12" width="15.3" height="1.3" fill="#444746"/></svg>
<svg class="a" style="left:906.5px;top:161.0px;" width="16" height="14" viewBox="0 0 16 14"><rect x="0.1" y="1" width="15.3" height="2.7" fill="#444746"/><rect x="0.1" y="5.5" width="6.6" height="1.9" fill="#444746"/><rect x="8.8" y="5.5" width="6.6" height="1.9" fill="#444746"/><rect x="0.1" y="8.9" width="3.7" height="1.6" fill="#444746"/><rect x="5.9" y="8.9" width="3.7" height="1.6" fill="#444746"/><rect x="11.7" y="8.9" width="3.7" height="1.6" fill="#444746"/><g fill="#444746"><rect x="0.1" y="12" width="1.5" height="1.4"/><rect x="3.5" y="12" width="1.5" height="1.4"/><rect x="7" y="12" width="1.5" height="1.4"/><rect x="10.4" y="12" width="1.5" height="1.4"/><rect x="13.9" y="12" width="1.5" height="1.4"/></g></svg>
<div class="a" style="left:936.0px;top:156.0px;width:1.0px;height:21.5px;background:#c7c7c7"></div>
<div class="t" style="left:953.7px;top:159.1px;font-size:15px;line-height:15px;color:#1f1f1f;font-weight:normal;">Arial</div>
<svg class="a" style="left:1024.0px;top:165.6px;" width="8" height="5" viewBox="0 0 8 5"><path d="M0 0 H8 L4 4.4Z" fill="#444746"/></svg>
<div class="a" style="left:1048.9px;top:156.0px;width:1.0px;height:21.5px;background:#c7c7c7"></div>
<svg class="a" style="left:1060.6px;top:158.0px" width="20" height="20" viewBox="0 0 24 24"><path fill="#444746" d="M12 8c1.1 0 2-.9 2-2s-.9-2-2-2-2 .9-2 2 .9 2 2 2zm0 2c-1.1 0-2 .9-2 2s.9 2 2 2 2-.9 2-2-.9-2-2-2zm0 6c-1.1 0-2 .9-2 2s.9 2 2 2 2-.9 2-2-.9-2-2-2z"/></svg>
<div class="a" style="left:341.0px;top:197.0px;width:854.0px;height:622.0px;background:#f8f9fa"></div>
<div class="a" style="left:1182.0px;top:250.0px;width:8.5px;height:531.0px;background:#dadce0;border-radius:4.25px"></div>
<div class="a" style="left:379.0px;top:806.0px;width:773.0px;height:8.0px;background:#dadce0;border-radius:4px"></div>
<svg class="a" style="left:0.0px;top:0.0px;" width="1536" height="863" viewBox="0 0 1536 863"><rect x="357" y="216.9" width="820" height="1" fill="#c4c7c5"/><rect x="357.2" y="217" width="1" height="603" fill="#c4c7c5"/><rect x="427.4" y="213" width="1" height="4" fill="#6b6f74"/><rect x="437.5" y="213" width="1" height="4" fill="#6b6f74"/><rect x="447.6" y="213" width="1" height="4" fill="#6b6f74"/><rect x="457.8" y="213" width="1" height="4" fill="#6b6f74"/><rect x="467.9" y="208.5" width="1" height="8.5" fill="#6b6f74"/><rect x="478.0" y="213" width="1" height="4" fill="#6b6f74"/><rect x="488.1" y="213" width="1" height="4" fill="#6b6f74"/><rect x="498.2" y="213" width="1" height="4" fill="#6b6f74"/><text x="508.8" y="211" text-anchor="middle" font-size="12" font-weight="bold" fill="#5f6368" font-family="Liberation Sans">1</text><rect x="508.3" y="213" width="1" height="4" fill="#6b6f74"/><rect x="518.5" y="213" width="1" height="4" fill="#6b6f74"/><rect x="528.6" y="213" width="1" height="4" fill="#6b6f74"/><rect x="538.7" y="213" width="1" height="4" fill="#6b6f74"/><rect x="548.8" y="208.5" width="1" height="8.5" fill="#6b6f74"/><rect x="558.9" y="213" width="1" height="4" fill="#6b6f74"/><rect x="569.1" y="213" width="1" height="4" fill="#6b6f74"/><rect x="579.2" y="213" width="1" height="4" fill="#6b6f74"/><text x="589.8" y="211" text-anchor="middle" font-size="12" font-weight="bold" fill="#5f6368" font-family="Liberation Sans">2</text><rect x="589.3" y="213" width="1" height="4" fill="#6b6f74"/><rect x="599.4" y="213" width="1" height="4" fill="#6b6f74"/><rect x="609.5" y="213" width="1" height="4" fill="#6b6f74"/><rect x="619.7" y="213" width="1" height="4" fill="#6b6f74"/><rect x="629.8" y="208.5" width="1" height="8.5" fill="#6b6f74"/><rect x="639.9" y="213" width="1" height="4" fill="#6b6f74"/><rect x="650.0" y="213" width="1" height="4" fill="#6b6f74"/><rect x="660.1" y="213" width="1" height="4" fill="#6b6f74"/><text x="670.8" y="211" text-anchor="middle" font-size="12" font-weight="bold" fill="#5f6368" font-family="Liberation Sans">3</text><rect x="670.2" y="213" width="1" height="4" fill="#6b6f74"/><rect x="680.4" y="213" width="1" height="4" fill="#6b6f74"/><rect x="690.5" y="213" width="1" height="4" fill="#6b6f74"/><rect x="700.6" y="213" width="1" height="4" fill="#6b6f74"/><rect x="710.7" y="208.5" width="1" height="8.5" fill="#6b6f74"/><rect x="720.8" y="213" width="1" height="4" fill="#6b6f74"/><rect x="731.0" y="213" width="1" height="4" fill="#6b6f74"/><rect x="741.1" y="213" width="1" height="4" fill="#6b6f74"/><text x="751.7" y="211" text-anchor="middle" font-size="12" font-weight="bold" fill="#5f6368" font-family="Liberation Sans">4</text><rect x="751.2" y="213" width="1" height="4" fill="#6b6f74"/><rect x="761.3" y="213" width="1" height="4" fill="#6b6f74"/><rect x="771.4" y="213" width="1" height="4" fill="#6b6f74"/><rect x="781.6" y="213" width="1" height="4" fill="#6b6f74"/><rect x="791.7" y="208.5" width="1" height="8.5" fill="#6b6f74"/><rect x="801.8" y="213" width="1" height="4" fill="#6b6f74"/><rect x="811.9" y="213" width="1" height="4" fill="#6b6f74"/><rect x="822.0" y="213" width="1" height="4" fill="#6b6f74"/><text x="832.6" y="211" text-anchor="middle" font-size="12" font-weight="bold" fill="#5f6368" font-family="Liberation Sans">5</text><rect x="832.1" y="213" width="1" height="4" fill="#6b6f74"/><rect x="842.3" y="213" width="1" height="4" fill="#6b6f74"/><rect x="852.4" y="213" width="1" height="4" fill="#6b6f74"/><rect x="862.5" y="213" width="1" height="4" fill="#6b6f74"/><rect x="872.6" y="208.5" width="1" height="8.5" fill="#6b6f74"/><rect x="882.7" y="213" width="1" height="4" fill="#6b6f74"/><rect x="892.9" y="213" width="1" height="4" fill="#6b6f74"/><rect x="903.0" y="213" width="1" height="4" fill="#6b6f74"/><text x="913.6" y="211" text-anchor="middle" font-size="12" font-weight="bold" fill="#5f6368" font-family="Liberation Sans">6</text><rect x="913.1" y="213" width="1" height="4" fill="#6b6f74"/><rect x="923.2" y="213" width="1" height="4" fill="#6b6f74"/><rect x="933.3" y="213" width="1" height="4" fill="#6b6f74"/><rect x="943.5" y="213" width="1" height="4" fill="#6b6f74"/><rect x="953.6" y="208.5" width="1" height="8.5" fill="#6b6f74"/><rect x="963.7" y="213" width="1" height="4" fill="#6b6f74"/><rect x="973.8" y="213" width="1" height="4" fill="#6b6f74"/><rect x="983.9" y="213" width="1" height="4" fill="#6b6f74"/><text x="994.5" y="211" text-anchor="middle" font-size="12" font-weight="bold" fill="#5f6368" font-family="Liberation Sans">7</text><rect x="994.0" y="213" width="1" height="4" fill="#6b6f74"/><rect x="1004.2" y="213" width="1" height="4" fill="#6b6f74"/><rect x="1014.3" y="213" width="1" height="4" fill="#6b6f74"/><rect x="1024.4" y="213" width="1" height="4" fill="#6b6f74"/><rect x="1034.5" y="208.5" width="1" height="8.5" fill="#6b6f74"/><rect x="1044.6" y="213" width="1" height="4" fill="#6b6f74"/><rect x="1054.8" y="213" width="1" height="4" fill="#6b6f74"/><rect x="1064.9" y="213" width="1" height="4" fill="#6b6f74"/><text x="1075.5" y="211" text-anchor="middle" font-size="12" font-weight="bold" fill="#5f6368" font-family="Liberation Sans">8</text><rect x="1075.0" y="213" width="1" height="4" fill="#6b6f74"/><rect x="1085.1" y="213" width="1" height="4" fill="#6b6f74"/><rect x="1095.2" y="213" width="1" height="4" fill="#6b6f74"/><rect x="427.5" y="216.9" width="673.5" height="1.1" fill="#6b6f74"/><rect x="353.5" y="234.9" width="4" height="1" fill="#6b6f74"/><rect x="353.5" y="245.0" width="4" height="1" fill="#6b6f74"/><rect x="353.5" y="255.1" width="4" height="1" fill="#6b6f74"/><rect x="353.5" y="265.3" width="4" height="1" fill="#6b6f74"/><rect x="349" y="275.4" width="8.5" height="1" fill="#6b6f74"/><rect x="353.5" y="285.5" width="4" height="1" fill="#6b6f74"/><rect x="353.5" y="295.6" width="4" height="1" fill="#6b6f74"/><rect x="353.5" y="305.7" width="4" height="1" fill="#6b6f74"/><text transform="translate(350.6 316.4) rotate(-90)" text-anchor="middle" font-size="12" font-weight="bold" fill="#5f6368" font-family="Liberation Sans">1</text><rect x="353.5" y="315.9" width="4" height="1" fill="#6b6f74"/><rect x="353.5" y="326.0" width="4" height="1" fill="#6b6f74"/><rect x="353.5" y="336.1" width="4" height="1" fill="#6b6f74"/><rect x="353.5" y="346.2" width="4" height="1" fill="#6b6f74"/><rect x="349" y="356.3" width="8.5" height="1" fill="#6b6f74"/><rect x="353.5" y="366.4" width="4" height="1" fill="#6b6f74"/><rect x="353.5" y="376.6" width="4" height="1" fill="#6b6f74"/><rect x="353.5" y="386.7" width="4" height="1" fill="#6b6f74"/><text transform="translate(350.6 397.3) rotate(-90)" text-anchor="middle" font-size="12" font-weight="bold" fill="#5f6368" font-family="Liberation Sans">2</text><rect x="353.5" y="396.8" width="4" height="1" fill="#6b6f74"/><rect x="353.5" y="406.9" width="4" height="1" fill="#6b6f74"/><rect x="353.5" y="417.0" width="4" height="1" fill="#6b6f74"/><rect x="353.5" y="427.2" width="4" height="1" fill="#6b6f74"/><rect x="349" y="437.3" width="8.5" height="1" fill="#6b6f74"/><rect x="353.5" y="447.4" width="4" height="1" fill="#6b6f74"/><rect x="353.5" y="457.5" width="4" height="1" fill="#6b6f74"/><rect x="353.5" y="467.6" width="4" height="1" fill="#6b6f74"/><text transform="translate(350.6 478.2) rotate(-90)" text-anchor="middle" font-size="12" font-weight="bold" fill="#5f6368" font-family="Liberation Sans">3</text><rect x="353.5" y="477.8" width="4" height="1" fill="#6b6f74"/><rect x="353.5" y="487.9" width="4" height="1" fill="#6b6f74"/><rect x="353.5" y="498.0" width="4" height="1" fill="#6b6f74"/><rect x="353.5" y="508.1" width="4" height="1" fill="#6b6f74"/><rect x="349" y="518.2" width="8.5" height="1" fill="#6b6f74"/><rect x="353.5" y="528.3" width="4" height="1" fill="#6b6f74"/><rect x="353.5" y="538.5" width="4" height="1" fill="#6b6f74"/><rect x="353.5" y="548.6" width="4" height="1" fill="#6b6f74"/><text transform="translate(350.6 559.2) rotate(-90)" text-anchor="middle" font-size="12" font-weight="bold" fill="#5f6368" font-family="Liberation Sans">4</text><rect x="353.5" y="558.7" width="4" height="1" fill="#6b6f74"/><rect x="353.5" y="568.8" width="4" height="1" fill="#6b6f74"/><rect x="353.5" y="578.9" width="4" height="1" fill="#6b6f74"/><rect x="353.5" y="589.1" width="4" height="1" fill="#6b6f74"/><rect x="349" y="599.2" width="8.5" height="1" fill="#6b6f74"/><rect x="353.5" y="609.3" width="4" height="1" fill="#6b6f74"/><rect x="353.5" y="619.4" width="4" height="1" fill="#6b6f74"/><rect x="353.5" y="629.5" width="4" height="1" fill="#6b6f74"/><text transform="translate(350.6 640.1) rotate(-90)" text-anchor="middle" font-size="12" font-weight="bold" fill="#5f6368" font-family="Liberation Sans">5</text><rect x="353.5" y="639.6" width="4" height="1" fill="#6b6f74"/><rect x="353.5" y="649.8" width="4" height="1" fill="#6b6f74"/><rect x="353.5" y="659.9" width="4" height="1" fill="#6b6f74"/><rect x="353.5" y="670.0" width="4" height="1" fill="#6b6f74"/><rect x="349" y="680.1" width="8.5" height="1" fill="#6b6f74"/><rect x="353.5" y="690.2" width="4" height="1" fill="#6b6f74"/><rect x="353.5" y="700.4" width="4" height="1" fill="#6b6f74"/><rect x="353.5" y="710.5" width="4" height="1" fill="#6b6f74"/><text transform="translate(350.6 721.1) rotate(-90)" text-anchor="middle" font-size="12" font-weight="bold" fill="#5f6368" font-family="Liberation Sans">6</text><rect x="353.5" y="720.6" width="4" height="1" fill="#6b6f74"/><rect x="353.5" y="730.7" width="4" height="1" fill="#6b6f74"/><rect x="353.5" y="740.8" width="4" height="1" fill="#6b6f74"/><rect x="357.2" y="235" width="1.1" height="506" fill="#6b6f74"/></svg>
<div class="a" style="left:427.0px;top:235.0px;width:675.0px;height:506.0px;background:conic-gradient(#fff 25%,#f6f6f6 0 50%,#fff 0 75%,#f6f6f6 0) 0 0/34.12px 34.12px"></div>
<svg class="a" style="left:0;top:0" width="1536" height="863" viewBox="0 0 1536 863"><path d="M563 305 H528 V369.4" fill="none" stroke="#555555" stroke-width="1.3"/><path d="M963 305 H998 V369.4" fill="none" stroke="#555555" stroke-width="1.3"/><path d="M465.8 392 H431.6 V469 H442.5" fill="none" stroke="#555555" stroke-width="1.3"/><path d="M663.2 392 H715 V469 H694.4" fill="none" stroke="#555555" stroke-width="1.3"/><path d="M856.5 392 H813 V469 H822" fill="none" stroke="#555555" stroke-width="1.3"/><path d="M1053.6 391.7 H1098.6 V469 H1089.4" fill="none" stroke="#555555" stroke-width="1.3"/><path d="M482.6 498.5 V625.6 H625.7" fill="none" stroke="#555555" stroke-width="1.3"/><path d="M904 625.6 H925 V498.5" fill="none" stroke="#555555" stroke-width="1.3"/><path d="M764.6 648.1 V711.3" fill="none" stroke="#555555" stroke-width="1.3"/><path d="M683.6 711.3 H856.4" fill="none" stroke="#2a2a2a" stroke-width="1.15"/><path d="M654 498.5 V528" fill="none" stroke="#2a2a2a" stroke-width="1.15"/><path d="M654 531.9 l-3 -9 h6z" fill="#2a2a2a"/><path d="M1050 497.8 V530" fill="none" stroke="#2a2a2a" stroke-width="1.15"/><path d="M1050 533.9 l-3 -9 h6z" fill="#2a2a2a"/><path d="M603.4 711.3 H568" fill="none" stroke="#2a2a2a" stroke-width="1.15"/><path d="M564.5 711.3 l9 -3 v6z" fill="#2a2a2a"/><path d="M936.6 711.3 H976" fill="none" stroke="#2a2a2a" stroke-width="1.15"/><path d="M979.5 711.3 l-9 -3 v6z" fill="#2a2a2a"/><rect x="563" y="275.3" width="400.00" height="58.90" rx="9" fill="#fcf2d1" stroke="#3a3a3a" stroke-width="1.25"/><text x="763" y="310.7" text-anchor="middle" font-size="15.6" font-family="Liberation Sans" fill="#000" font-weight="bold">Should We Launch a New Product?</text><rect x="465.8" y="369.4" width="197.40" height="45.20" rx="8" fill="#d0dff1" stroke="#3a3a3a" stroke-width="1.25"/><text x="564.5" y="395.6" text-anchor="middle" font-size="11.2" font-family="Liberation Sans" fill="#000" font-weight="bold">Is there demand for the product?</text><rect x="856.5" y="369.4" width="197.10" height="45.20" rx="8" fill="#d0dff1" stroke="#3a3a3a" stroke-width="1.25"/><text x="955" y="395.6" text-anchor="middle" font-size="11.2" font-family="Liberation Sans" fill="#000" font-weight="bold">Is there enough funding?</text><ellipse cx="482.6" cy="468.9" rx="40.1" ry="29.7" fill="#dbe8d4" stroke="#3a3a3a" stroke-width="1.25"/><text x="482.6" y="473.8" text-anchor="middle" font-size="13.2" font-family="Liberation Sans" fill="#000">YES</text><ellipse cx="654" cy="468.9" rx="40.3" ry="29.7" fill="#efcfcf" stroke="#3a3a3a" stroke-width="1.25"/><text x="654" y="473.8" text-anchor="middle" font-size="13.2" font-family="Liberation Sans" fill="#000">NO</text><ellipse cx="925" cy="468.9" rx="40.1" ry="29.7" fill="#dbe8d4" stroke="#3a3a3a" stroke-width="1.25"/><text x="925" y="473.8" text-anchor="middle" font-size="13.2" font-family="Liberation Sans" fill="#000">YES</text><ellipse cx="1050" cy="468.6" rx="39.7" ry="29.2" fill="#d0dff1" stroke="#3a3a3a" stroke-width="1.25"/><text x="1050" y="473.5" text-anchor="middle" font-size="13.2" font-family="Liberation Sans" fill="#000">NO</text><rect x="594.6" y="532" width="119.15" height="37.60" rx="7" fill="#d0dff1" stroke="#3a3a3a" stroke-width="1.25"/><text x="654.2" y="555" text-anchor="middle" font-size="11.2" font-family="Liberation Sans" fill="#000">Do not launch</text><rect x="1001" y="533.9" width="98.40" height="38.30" rx="7" fill="#d0dff1" stroke="#3a3a3a" stroke-width="1.25"/><text x="1050.2" y="558" text-anchor="middle" font-size="11.2" font-family="Liberation Sans" fill="#000">Seek Funding</text><rect x="625.7" y="603.6" width="278.30" height="44.50" rx="8" fill="#d0dff1" stroke="#3a3a3a" stroke-width="1.25"/><text x="764.8" y="630.3" text-anchor="middle" font-size="11.2" font-family="Liberation Sans" fill="#000" font-weight="bold">Will the product provide long-term profitability?</text><ellipse cx="643.5" cy="711.3" rx="40.1" ry="29.4" fill="#d0dff1" stroke="#3a3a3a" stroke-width="1.25"/><text x="643.5" y="716.5" text-anchor="middle" font-size="13.2" font-family="Liberation Sans" fill="#000">YES</text><ellipse cx="896.5" cy="711.3" rx="40.1" ry="29.3" fill="#d0dff1" stroke="#3a3a3a" stroke-width="1.25"/><text x="896.5" y="716.5" text-anchor="middle" font-size="13.2" font-family="Liberation Sans" fill="#000">NO</text><rect x="444.5" y="692.4" width="119.50" height="38.20" rx="7" fill="#d0dff1" stroke="#3a3a3a" stroke-width="1.25"/><text x="504.25" y="715.4" text-anchor="middle" font-size="11.2" font-family="Liberation Sans" fill="#000">Launch the product</text><rect x="979.9" y="692.3" width="118.90" height="38.10" rx="7" fill="#d0dff1" stroke="#3a3a3a" stroke-width="1.25"/><text x="1039.35" y="715.4" text-anchor="middle" font-size="11.2" font-family="Liberation Sans" fill="#000">Do not launch</text></svg>
<svg class="a" style="left:0;top:0" width="1536" height="863" viewBox="0 0 1536 863"><path d="M1050 439.4 A39.4 29.2 0 0 1 1050 497.8" fill="none" stroke="#8ab4f8" stroke-opacity="0.6" stroke-width="3.2"/><path d="M1050 439.4 A39.7 29.2 0 0 1 1050 497.8" fill="none" stroke="#2a2a2a" stroke-width="1.2"/><path d="M1010.3 439.4 H1089.4 V497.8 H1010.3 Z" fill="none" stroke="#3b74de" stroke-width="1"/><path d="M1050 413.5 V439.4" stroke="#3b74de" stroke-width="1"/><circle cx="1050.3" cy="413.9" r="3.6" fill="#3b74de"/><rect x="1006.8" y="435.9" width="7" height="7" fill="#3b74de"/><rect x="1046.5" y="435.9" width="7" height="7" fill="#3b74de"/><rect x="1085.9" y="435.9" width="7" height="7" fill="#3b74de"/><rect x="1006.8" y="465.1" width="7" height="7" fill="#3b74de"/><rect x="1085.9" y="465.1" width="7" height="7" fill="#3b74de"/><rect x="1006.8" y="494.3" width="7" height="7" fill="#3b74de"/><rect x="1046.5" y="494.3" width="7" height="7" fill="#3b74de"/><rect x="1085.9" y="494.3" width="7" height="7" fill="#3b74de"/></svg>
<div class="a" style="left:789.0px;top:183.4px;width:259.0px;height:376.6px;background:#fff;border-radius:7px;box-shadow:0 1px 2px rgba(0,0,0,.3),0 2px 6px 2px rgba(0,0,0,.15)"></div>
<div class="t" style="left:832.7px;top:201.1px;font-size:15px;line-height:15px;color:#1f1f1f;font-weight:normal;">Solid</div>
<div class="t" style="left:917.3px;top:201.1px;font-size:15px;line-height:15px;color:#5f6368;font-weight:normal;">Gradient</div>
<div class="a" style="left:800.5px;top:223.4px;width:98.2px;height:2.5px;background:#d9534f;border-radius:1px"></div>
<div class="t" style="left:806.0px;top:241.4px;font-size:11px;line-height:11px;color:#444746;font-weight:bold;letter-spacing:0.8px">CUSTOM</div>
<svg class="a" style="left:802.5px;top:263.2px" width="19" height="19" viewBox="0 0 24 24"><path fill="#444746" d="M13 7h-2v4H7v2h4v4h2v-4h4v-2h-4V7zm-1-5C6.48 2 2 6.48 2 12s4.48 10 10 10 10-4.48 10-10S17.52 2 12 2zm0 18c-4.41 0-8-3.59-8-8s3.59-8 8-8 8 3.59 8 8-3.59 8-8 8z"/></svg>
<svg class="a" style="left:826.0px;top:263.0px" width="19" height="19" viewBox="0 0 24 24"><path fill="#444746" d="M20.71 5.63l-2.34-2.34c-.39-.39-1.02-.39-1.41 0l-3.12 3.12-1.93-1.91-1.41 1.41 1.42 1.42L3 16.25V21h4.75l8.92-8.92 1.42 1.42 1.41-1.41-1.92-1.92 3.12-3.12c.4-.4.4-1.03.01-1.42zM6.92 19L5 17.08l8.06-8.06 1.92 1.92L6.92 19z"/></svg>
<div class="a" style="left:800.5px;top:295.0px;width:235.3px;height:1.0px;background:#dadce0"></div>
<svg class="a" style="left:0.0px;top:0.0px;" width="1536" height="863" viewBox="0 0 1536 863"><circle cx="812.20" cy="317.80" r="10.5" fill="#000000"/><circle cx="835.69" cy="317.80" r="10.5" fill="#434343"/><circle cx="859.18" cy="317.80" r="10.5" fill="#666666"/><circle cx="882.67" cy="317.80" r="10.5" fill="#999999"/><circle cx="906.16" cy="317.80" r="10.5" fill="#b7b7b7"/><circle cx="929.65" cy="317.80" r="10.5" fill="#cccccc" stroke="#dadce0" stroke-width="1"/><circle cx="953.14" cy="317.80" r="10.5" fill="#d9d9d9" stroke="#dadce0" stroke-width="1"/><circle cx="976.63" cy="317.80" r="10.5" fill="#efefef" stroke="#dadce0" stroke-width="1"/><circle cx="1000.12" cy="317.80" r="10.5" fill="#f3f3f3" stroke="#dadce0" stroke-width="1"/><circle cx="1023.61" cy="317.80" r="10.5" fill="#ffffff" stroke="#dadce0" stroke-width="1"/><circle cx="812.20" cy="341.30" r="10.5" fill="#8a1a12"/><circle cx="835.69" cy="341.30" r="10.5" fill="#e8362a"/><circle cx="859.18" cy="341.30" r="10.5" fill="#f39e38"/><circle cx="882.67" cy="341.30" r="10.5" fill="#fefe54"/><circle cx="906.16" cy="341.30" r="10.5" fill="#75fb4c"/><circle cx="929.65" cy="341.30" r="10.5" fill="#74fbfd"/><circle cx="953.14" cy="341.30" r="10.5" fill="#5886e0"/><circle cx="976.63" cy="341.30" r="10.5" fill="#0000f5"/><circle cx="1000.12" cy="341.30" r="10.5" fill="#8c1cf5"/><circle cx="1023.61" cy="341.30" r="10.5" fill="#ea3cf7"/><circle cx="812.20" cy="364.80" r="10.5" fill="#dfb8b0" stroke="#dadce0" stroke-width="1"/><circle cx="835.69" cy="364.80" r="10.5" fill="#efcfcf" stroke="#dadce0" stroke-width="1"/><circle cx="859.18" cy="364.80" r="10.5" fill="#f9e5d3" stroke="#dadce0" stroke-width="1"/><circle cx="882.67" cy="364.80" r="10.5" fill="#fcf2d1" stroke="#dadce0" stroke-width="1"/><circle cx="906.16" cy="364.80" r="10.5" fill="#dce8d5" stroke="#dadce0" stroke-width="1"/><circle cx="929.65" cy="364.80" r="10.5" fill="#d3e0e2" stroke="#dadce0" stroke-width="1"/><circle cx="953.14" cy="364.80" r="10.5" fill="#cad9f4" stroke="#dadce0" stroke-width="1"/><circle cx="976.63" cy="364.80" r="10.5" fill="#d0dff1" stroke="#dadce0" stroke-width="1"/><circle cx="1000.12" cy="364.80" r="10.5" fill="#d8d3e6" stroke="#dadce0" stroke-width="1"/><circle cx="1023.61" cy="364.80" r="10.5" fill="#e8d3dc" stroke="#dadce0" stroke-width="1"/><circle cx="812.20" cy="388.30" r="10.5" fill="#cf7f6c"/><circle cx="835.69" cy="388.30" r="10.5" fill="#e09b9b"/><circle cx="859.18" cy="388.30" r="10.5" fill="#f3cba0"/><circle cx="882.67" cy="388.30" r="10.5" fill="#fbe59f"/><circle cx="906.16" cy="388.30" r="10.5" fill="#b9d6aa"/><circle cx="929.65" cy="388.30" r="10.5" fill="#a5c3c7"/><circle cx="953.14" cy="388.30" r="10.5" fill="#a9bfee"/><circle cx="976.63" cy="388.30" r="10.5" fill="#a2c4e4"/><circle cx="1000.12" cy="388.30" r="10.5" fill="#b2a7d3"/><circle cx="1023.61" cy="388.30" r="10.5" fill="#d0a8bb"/><circle cx="812.20" cy="411.80" r="10.5" fill="#c24b31"/><circle cx="835.69" cy="411.80" r="10.5" fill="#d16a64"/><circle cx="859.18" cy="411.80" r="10.5" fill="#eab071"/><circle cx="882.67" cy="411.80" r="10.5" fill="#f6d66c"/><circle cx="906.16" cy="411.80" r="10.5" fill="#9ac282"/><circle cx="929.65" cy="411.80" r="10.5" fill="#7ea4ab"/><circle cx="953.14" cy="411.80" r="10.5" fill="#769ee5"/><circle cx="976.63" cy="411.80" r="10.5" fill="#76a6d7"/><circle cx="1000.12" cy="411.80" r="10.5" fill="#8d7fbf"/><circle cx="1023.61" cy="411.80" r="10.5" fill="#bb7d9b"/><circle cx="812.20" cy="435.30" r="10.5" fill="#a12b17"/><circle cx="835.69" cy="435.30" r="10.5" fill="#c1271f"/><circle cx="859.18" cy="435.30" r="10.5" fill="#dd913f"/><circle cx="882.67" cy="435.30" r="10.5" fill="#e6c044"/><circle cx="906.16" cy="435.30" r="10.5" fill="#72a75a"/><circle cx="929.65" cy="435.30" r="10.5" fill="#4e7f8a"/><circle cx="953.14" cy="435.30" r="10.5" fill="#4777d6"/><circle cx="976.63" cy="435.30" r="10.5" fill="#4282c4"/><circle cx="1000.12" cy="435.30" r="10.5" fill="#6651a6"/><circle cx="1023.61" cy="435.30" r="10.5" fill="#9e5177"/><circle cx="812.20" cy="458.80" r="10.5" fill="#7f2614"/><circle cx="835.69" cy="458.80" r="10.5" fill="#8f1d12"/><circle cx="859.18" cy="458.80" r="10.5" fill="#a9611a"/><circle cx="882.67" cy="458.80" r="10.5" fill="#b8911f"/><circle cx="906.16" cy="458.80" r="10.5" fill="#447332"/><circle cx="929.65" cy="458.80" r="10.5" fill="#1f4d58"/><circle cx="953.14" cy="458.80" r="10.5" fill="#2351cb"/><circle cx="976.63" cy="458.80" r="10.5" fill="#1f5292"/><circle cx="1000.12" cy="458.80" r="10.5" fill="#351f76"/><circle cx="1023.61" cy="458.80" r="10.5" fill="#6c2046"/><circle cx="812.20" cy="482.30" r="10.5" fill="#551a0a"/><circle cx="835.69" cy="482.30" r="10.5" fill="#5f0e07"/><circle cx="859.18" cy="482.30" r="10.5" fill="#6f3f13"/><circle cx="882.67" cy="482.30" r="10.5" fill="#7a6218"/><circle cx="906.16" cy="482.30" r="10.5" fill="#2d4b1d"/><circle cx="929.65" cy="482.30" r="10.5" fill="#13333c"/><circle cx="953.14" cy="482.30" r="10.5" fill="#22427f"/><circle cx="976.63" cy="482.30" r="10.5" fill="#13365f"/><circle cx="1000.12" cy="482.30" r="10.5" fill="#1c1350"/><circle cx="1023.61" cy="482.30" r="10.5" fill="#47162c"/><path d="M971.63 365.10 l3.3 3.3 l6.6 -6.6" fill="none" stroke="#1f1f1f" stroke-width="1.6"/></svg>
<div class="a" style="left:801.0px;top:506.4px;width:234.8px;height:41.9px;background:#fff;border:1px solid #cfd1d3;border-radius:21px"></div>
<svg class="a" style="left:870.7px;top:519.0px" width="18" height="18" viewBox="0 0 24 24"><path fill="#444746" d="M18 14c0-4-6-10.8-6-10.8s-1.33 1.51-2.73 3.52l8.59 8.59c.09-.42.14-.86.14-1.31zm-.88 3.12L12.5 12.5 5.27 5.27 4 6.55l3.32 3.32C6.55 11.32 6 12.79 6 14c0 3.31 2.69 6 6 6 1.52 0 2.9-.57 3.96-1.5l2.63 2.63 1.27-1.27-2.74-2.74z"/></svg>
<div class="t" style="left:898.3px;top:518.7px;font-size:15px;line-height:15px;color:#1f1f1f;font-weight:normal;">Transparent</div>
<svg class="a" style="left:349.5px;top:815.0px;" width="20" height="22" viewBox="0 0 20 22"><g fill="none" stroke="#2e7f6d" stroke-width="1.15"><path d="M1.70 11 A8.3 8.3 0 0 1 18.30 11 V19.5"/><path d="M1.70 11 V19"/><path d="M3.80 11 A6.2 6.2 0 0 1 16.20 11 V19.5"/><path d="M3.80 11 V19"/><path d="M5.90 11 A4.1 4.1 0 0 1 14.10 11 V19.5"/><path d="M5.90 11 V19"/><path d="M8.00 11 A2.0 2.0 0 0 1 12.00 11 V18.5"/><path d="M8.00 11 V18.5"/><path d="M10 10 V20"/></g></svg>
</body></html>
